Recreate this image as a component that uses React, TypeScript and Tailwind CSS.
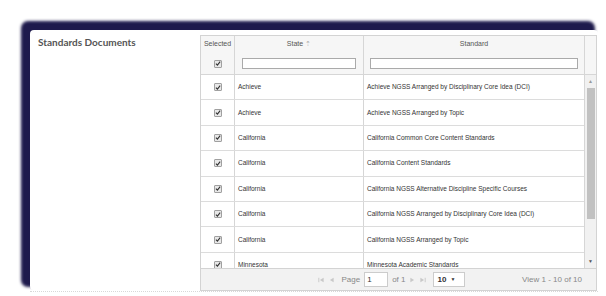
import React from "react";

const rows: [string, string][] = [
  ["Achieve", "Achieve NGSS Arranged by Disciplinary Core Idea (DCI)"],
  ["Achieve", "Achieve NGSS Arranged by Topic"],
  ["California", "California Common Core Content Standards"],
  ["California", "California Content Standards"],
  ["California", "California NGSS Alternative Discipline Specific Courses"],
  ["California", "California NGSS Arranged by Disciplinary Core Idea (DCI)"],
  ["California", "California NGSS Arranged by Topic"],
  ["Minnesota", "Minnesota Academic Standards"],
];

function Check() {
  return (
    <span className="inline-flex h-[8px] w-[8px] items-center justify-center rounded-[1px] border border-[#a0a0a0] bg-[#e8e8e8]">
      <svg viewBox="0 0 10 10" className="h-[7px] w-[7px]">
        <path d="M1.5 5.2 L4 7.8 L8.6 1.8" fill="none" stroke="#333" strokeWidth="1.8" />
      </svg>
    </span>
  );
}

function PagerArrow({ first, flip }: { first?: boolean; flip?: boolean }) {
  return (
    <svg viewBox="0 0 8 8" className="h-[6px] w-[6px]" style={flip ? { transform: "scaleX(-1)" } : undefined}>
      {first && <rect x="0.5" y="1" width="1.2" height="6" fill="#c8c8c8" />}
      <path d="M2.5 4 L7.5 1 L7.5 7 Z" fill="#c8c8c8" />
    </svg>
  );
}

export default function App() {
  return (
    <div className="relative h-[296px] w-[606px] overflow-hidden bg-white font-['Liberation_Sans',Arial,sans-serif]">
      <div className="pl-[30px] pr-[8px] pt-[30px]">
        <div className="flex h-[260px] rounded-[4px] bg-white shadow-[-6px_-6px_3px_3px_#1e1a4c]">
          <div className="w-[170px] pl-[8px] pt-[5px] font-['Lato',sans-serif] text-[10px] font-bold text-[#555]">
            Standards Documents
          </div>

          <div className="mt-[5px] flex h-[256px] w-[397px] flex-col border border-[#d3d3d3] text-[6.5px] text-[#333]">
            {/* header */}
            <div className="flex bg-[#f6f6f6] text-[7px] text-[#555]">
              <div className="flex w-[34px] shrink-0 flex-col border-r border-[#d6d6d6]">
                <div className="flex h-[17px] items-center justify-center">Selected</div>
                <div className="flex h-[21px] items-center justify-center">
                  <Check />
                </div>
              </div>
              <div className="flex w-[129px] shrink-0 flex-col border-r border-[#d6d6d6]">
                <div className="flex h-[17px] items-center justify-center gap-[2px]">
                  State <span className="text-[7px] text-[#aaa]">⇡</span>
                </div>
                <div className="flex h-[21px] items-center px-[7px]">
                  <div className="h-[11px] w-full border border-[#aaa] bg-white" />
                </div>
              </div>
              <div className="flex w-[221px] shrink-0 flex-col border-r border-[#d6d6d6]">
                <div className="flex h-[17px] items-center justify-center">Standard</div>
                <div className="flex h-[21px] items-center px-[6px]">
                  <div className="h-[11px] w-full border border-[#aaa] bg-white" />
                </div>
              </div>
              <div className="flex-1" />
            </div>

            {/* body */}
            <div className="flex h-[195px] overflow-hidden border-t border-[#d6d6d6]">
              <div className="w-[384px] shrink-0 border-r border-[#d6d6d6]">
                {rows.map(([state, std], i) => (
                  <div key={i} className="flex h-[25.4px] shrink-0 border-b border-[#dcdcdc]">
                    <div className="flex w-[34px] shrink-0 items-center justify-center border-r border-[#d6d6d6]">
                      <Check />
                    </div>
                    <div className="flex w-[129px] shrink-0 items-center border-r border-[#d6d6d6] pl-[3px]">
                      {state}
                    </div>
                    <div className="flex flex-1 items-center pl-[3px]">{std}</div>
                  </div>
                ))}
              </div>
              <div className="flex flex-1 flex-col items-center bg-[#f1f1f1]">
                <div className="flex h-[13px] items-center text-[5px] text-[#999]">▲</div>
                <div className="h-[131px] w-[8px] bg-[#c1c1c1]" />
                <div className="flex-1" />
                <div className="flex h-[13px] items-center text-[5px] text-[#555]">▼</div>
              </div>
            </div>

            {/* pager */}
            <div className="relative flex h-[22px] items-center justify-center border-t border-[#d3d3d3] bg-[#f2f2f2] text-[8px] text-[#888]">
              <div className="mr-[14px] flex items-center gap-[4px]">
                <PagerArrow first />
                <PagerArrow />
                <span className="ml-[3px]">Page</span>
                <div className="flex h-[15px] w-[24px] items-center border border-[#ccc] bg-white pl-[2px] text-[#333]">1</div>
                <span>of 1</span>
                <PagerArrow flip />
                <PagerArrow first flip />
                <div className="ml-[3px] flex h-[15px] w-[32px] items-center gap-[4px] border border-[#ccc] bg-white pl-[4px] font-bold text-[#333]">
                  10 <span className="text-[5px]">▼</span>
                </div>
              </div>
              <div className="absolute right-[14px] top-0 flex h-full items-center">View 1 - 10 of 10</div>
            </div>
          </div>
        </div>
        <div className="mt-[1px] h-0 border-t border-dotted border-[#d8d8d8]" />
      </div>
    </div>
  );
}
